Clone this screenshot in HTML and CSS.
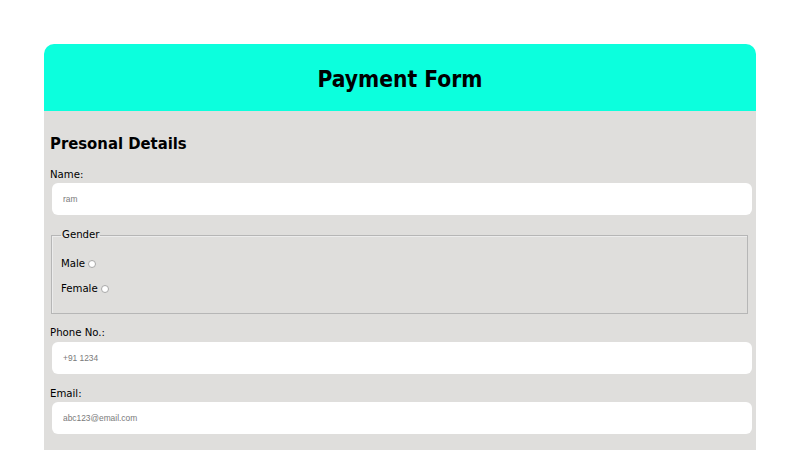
FILE: index.html
```html
<!DOCTYPE html>
<html lang="en">
<head>
<meta charset="utf-8">
<title>Payment Form</title>
<link rel="stylesheet" href="styles.css">
</head>
<body>
<div class="card">
  <div class="card-header">
    <h1 class="title">Payment Form</h1>
  </div>
  <form class="card-body">
    <h2 class="section-title">Presonal Details</h2>
    <label class="label label-first" for="name">Name:</label>
    <input class="text-input input-name" id="name" type="text" placeholder="ram">
    <fieldset class="gender">
      <legend class="legend">Gender</legend>
      <div class="radio-row">
        <label for="male">Male</label><input class="radio" type="radio" id="male" name="gender">
      </div>
      <div class="radio-row radio-row-second">
        <label for="female">Female</label><input class="radio" type="radio" id="female" name="gender">
      </div>
    </fieldset>
    <label class="label label-phone" for="phone">Phone No.:</label>
    <input class="text-input input-phone" id="phone" type="text" placeholder="+91 1234">
    <label class="label label-email" for="email">Email:</label>
    <input class="text-input input-email" id="email" type="text" placeholder="abc123@email.com">
  </form>
</div>
</body>
</html>
```
FILE: styles.css
```css
html, body {
  margin: 0;
  padding: 0;
  background: #ffffff;
}

body {
  padding-top: 44px;
  font-family: "DejaVu Sans Condensed", "DejaVu Sans", sans-serif;
  color: #000000;
}

.card {
  width: 712px;
  margin: 0 auto;
}

.card-header {
  height: 67px;
  background: #0cffdd;
  border-radius: 10px 10px 0 0;
  display: flex;
  align-items: center;
  justify-content: center;
}

.title {
  margin: 0;
  font-size: 22.6px;
  line-height: 24px;
  font-weight: bold;
  padding-top: 2px;
}

.card-body {
  background: #dfdedc;
  padding: 23px 4px 16px 6px;
}

.section-title {
  margin: 0;
  font-size: 16.5px;
  line-height: 20px;
  font-weight: bold;
}

.label {
  display: block;
  font-size: 11.3px;
  line-height: 14px;
}

.label-first {
  margin-top: 14px;
}

.label-phone {
  margin-top: 12px;
}

.label-email {
  margin-top: 13px;
}

.text-input {
  display: block;
  box-sizing: border-box;
  width: 700px;
  height: 32px;
  margin: 1px 0 0 2px;
  padding: 0 11px;
  border: none;
  border-radius: 6px;
  background: #ffffff;
  font-family: "Liberation Sans", Arial, sans-serif;
  font-size: 8.4px;
  outline: none;
}

.input-phone {
  margin-top: 2px;
}

.text-input::placeholder {
  color: #7a7a7a;
}

.gender {
  margin: 13px 4px 0 1px;
  padding: 0 8px 17px 9px;
  border: 1px solid #b6b6b6;
  box-shadow: inset 1px 1px 0 #ececec;
  font-size: 11.3px;
  line-height: 14px;
}

.legend {
  padding: 0 1px 0 1px;
  font-size: 11.3px;
  line-height: 14px;
}

.radio-row {
  margin-top: 15px;
  display: flex;
  align-items: center;
  height: 14px;
}

.radio-row-second {
  margin-top: 11px;
}

.radio {
  appearance: none;
  -webkit-appearance: none;
  width: 8px;
  height: 8px;
  margin: 0 0 0 3px;
  border: 1px solid #a8a8a8;
  border-radius: 50%;
  background: #ffffff;
  box-sizing: border-box;
}
```
